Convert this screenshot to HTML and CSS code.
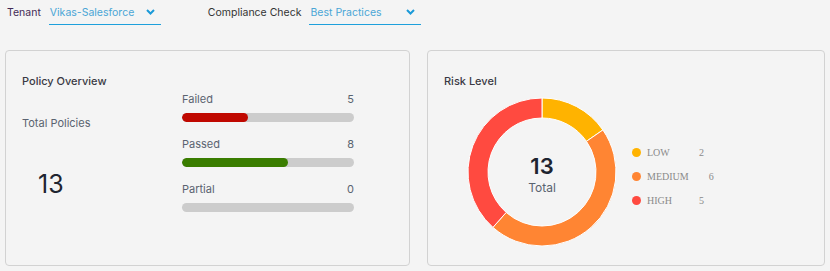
FILE: index.html
```html
<!doctype html>
<html lang="en">

<head>
    <meta charset="UTF-8" />
    <meta name="viewport" content="width=device-width, initial-scale=1.0" />
    <title>Compliance Dashboard</title>
    <link rel="stylesheet" href="styles.css">
</head>

<body>
    <header class="filters">
        <span class="filter-label tenant-label">Tenant</span>
        <div class="select select-tenant">
            <span>Vikas-Salesforce</span>
            <svg class="chevron" width="9" height="6" viewBox="0 0 9 6">
                <polyline points="1,1 4.5,4.5 8,1" fill="none" stroke="#1b9ad8" stroke-width="2" />
            </svg>
        </div>
        <span class="filter-label check-label">Compliance Check</span>
        <div class="select select-check">
            <span>Best Practices</span>
            <svg class="chevron" width="9" height="6" viewBox="0 0 9 6">
                <polyline points="1,1 4.5,4.5 8,1" fill="none" stroke="#1b9ad8" stroke-width="2" />
            </svg>
        </div>
    </header>

    <main class="cards">
        <section class="card card-policy">
            <div class="policy-summary">
                <h2 class="card-title">Policy Overview</h2>
                <div class="total-label">Total Policies</div>
                <div class="total-value">13</div>
            </div>
            <div class="policy-bars">
                <div class="bar-row">
                    <div class="bar-head"><span>Failed</span><span>5</span></div>
                    <div class="bar-track"><div class="bar-fill failed" style="width: 38.46%"></div></div>
                </div>
                <div class="bar-row">
                    <div class="bar-head"><span>Passed</span><span>8</span></div>
                    <div class="bar-track"><div class="bar-fill passed" style="width: 61.54%"></div></div>
                </div>
                <div class="bar-row">
                    <div class="bar-head"><span>Partial</span><span>0</span></div>
                    <div class="bar-track"><div class="bar-fill partial" style="width: 0%"></div></div>
                </div>
            </div>
        </section>

        <section class="card card-risk">
            <h2 class="card-title">Risk Level</h2>
            <div class="risk-body">
                <div class="donut">
                    <svg width="150" height="150" viewBox="0 0 150 150">
                        <path class="seg-low" d="M75 1 A74 74 0 0 1 135.90 32.96 L119.44 44.32 A54 54 0 0 0 75 21 Z" />
                        <path class="seg-medium" d="M135.90 32.96 A74 74 0 0 1 25.93 130.39 L39.19 115.42 A54 54 0 0 0 119.44 44.32 Z" />
                        <path class="seg-high" d="M25.93 130.39 A74 74 0 0 1 75 1 L75 21 A54 54 0 0 0 39.19 115.42 Z" />
                    </svg>
                    <div class="donut-center">
                        <div class="donut-value">13</div>
                        <div class="donut-label">Total</div>
                    </div>
                </div>
                <ul class="legend">
                    <li><span class="dot low"></span><span class="legend-name">LOW</span><span class="legend-count">2</span></li>
                    <li><span class="dot medium"></span><span class="legend-name">MEDIUM</span><span class="legend-count">6</span></li>
                    <li><span class="dot high"></span><span class="legend-name">HIGH</span><span class="legend-count">5</span></li>
                </ul>
            </div>
        </section>
    </main>
</body>

</html>
```

FILE: styles.css
```css
:root {
    --bg-color: #f4f4f4;
    --border-color: #d2d2d2;
    --text-color: #333333;
    --muted-color: #5a6370;
    --accent-color: #1ea0dc;
    --low-color: #ffb300;
    --medium-color: #ff8533;
    --high-color: #ff4a40;
}

* {
    margin: 0;
    padding: 0;
    box-sizing: border-box;
}

body {
    background-color: var(--bg-color);
    color: var(--text-color);
    font-family: Inter, "Liberation Sans", sans-serif;
    font-size: 11px;
    line-height: 14px;
    padding: 1px 5px 0 5px;
}

.filters {
    display: flex;
    align-items: center;
    height: 24px;
    padding-left: 2px;
    font-size: 10.5px;
}

.filter-label {
    color: #333;
}

.tenant-label {
    color: #432a55;
    margin-right: 8px;
}

.check-label {
    margin-left: 47px;
    margin-right: 8px;
}

.select {
    display: flex;
    align-items: center;
    justify-content: space-between;
    height: 24px;
    width: 112px;
    padding: 0 6px 0 1px;
    border-bottom: 1px solid var(--accent-color);
    color: #4aa6d6;
}

.chevron {
    display: block;
    margin-top: -2px;
}

.cards {
    display: flex;
    gap: 17px;
    margin-top: 25px;
}

.card {
    border: 1px solid var(--border-color);
    border-radius: 4px;
    height: 216px;
    padding: 23px 16px 0 16px;
}

.card-title {
    font-size: 11px;
    font-weight: 500;
    line-height: 14px;
    color: #3a3a44;
}

.card-policy {
    width: 406px;
    display: flex;
}

.policy-summary {
    width: 160px;
}

.total-label {
    margin-top: 28px;
    color: var(--muted-color);
}

.total-value {
    margin-top: 39px;
    padding-left: 16px;
    font-size: 25px;
    line-height: 30px;
    color: #1e2430;
}

.policy-bars {
    width: 172px;
    margin-top: 18px;
}

.bar-row {
    margin-bottom: 15px;
}

.bar-head {
    display: flex;
    justify-content: space-between;
    color: var(--muted-color);
}

.bar-track {
    margin-top: 7px;
    height: 9px;
    border-radius: 5px;
    background-color: #cccccc;
    overflow: hidden;
}

.bar-fill {
    height: 100%;
    border-radius: 5px;
}

.bar-fill.failed {
    background-color: #c00800;
}

.bar-fill.passed {
    background-color: #3a7d00;
}

.card-risk {
    width: 399px;
}

.risk-body {
    display: flex;
    align-items: center;
    margin-top: 9px;
    padding-left: 23px;
}

.donut {
    position: relative;
    width: 150px;
    height: 150px;
}

.donut svg {
    display: block;
}

.donut path {
    stroke: #ffffff;
    stroke-width: 1;
}

.seg-low {
    fill: var(--low-color);
}

.seg-medium {
    fill: var(--medium-color);
}

.seg-high {
    fill: var(--high-color);
}

.donut-center {
    position: absolute;
    top: 0;
    left: 0;
    width: 100%;
    height: 100%;
    display: flex;
    flex-direction: column;
    align-items: center;
    justify-content: center;
    padding-top: 4px;
}

.donut-value {
    font-size: 22px;
    font-weight: 600;
    line-height: 26px;
    color: #1e2430;
}

.donut-label {
    margin-top: 2px;
    font-size: 12px;
    line-height: 14px;
    color: var(--muted-color);
}

.legend {
    list-style: none;
    margin-left: 15px;
    padding-top: 9px;
    font-family: "Liberation Serif", serif;
    font-size: 10px;
    color: #8a8a8a;
}

.legend li {
    display: flex;
    align-items: center;
    height: 24px;
}

.dot {
    width: 9px;
    height: 9px;
    border-radius: 50%;
    margin-right: 6px;
}

.dot.low {
    background-color: var(--low-color);
}

.dot.medium {
    background-color: var(--medium-color);
}

.dot.high {
    background-color: var(--high-color);
}

.legend-name {
    min-width: 32px;
    margin-right: 20px;
}
```
